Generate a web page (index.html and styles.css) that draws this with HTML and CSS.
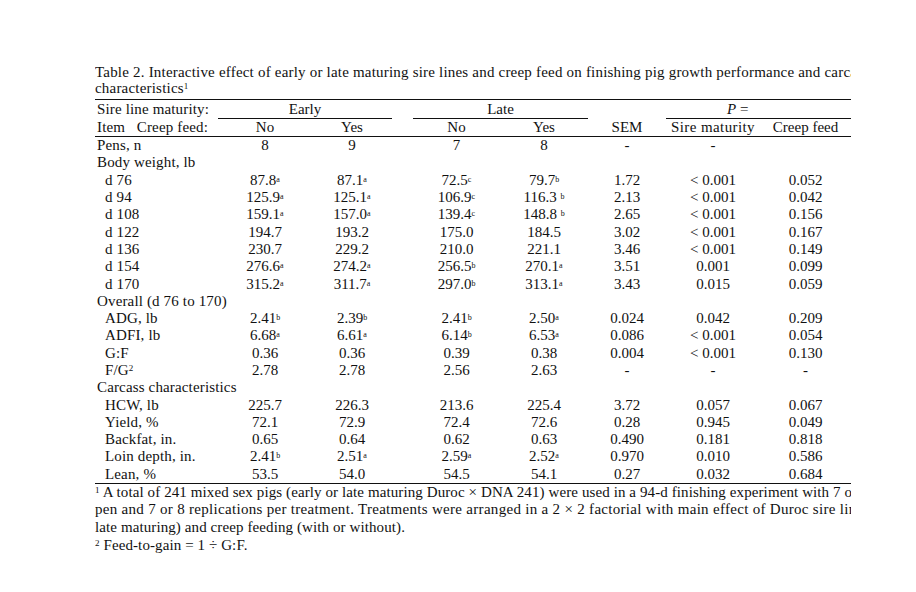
FILE: index.html
```html
<!DOCTYPE html>
<html>
<head>
<meta charset="utf-8">
<link rel="stylesheet" href="styles.css">
</head>
<body>
<div class="sheet">
  <div class="caption">
    <div class="line">Table 2. Interactive effect of early or late maturing sire lines and creep feed on finishing pig growth performance and carcass</div>
    <div class="line">characteristics<sup class="fn">1</sup></div>
  </div>
  <table class="tbl">
    <colgroup>
      <col class="c-item"><col class="c-eno"><col class="c-eyes"><col class="c-gap"><col class="c-lno"><col class="c-lyes"><col class="c-sem"><col class="c-sire"><col class="c-creep">
    </colgroup>
    <thead>
      <tr class="h1">
        <td class="lbl">Sire line maturity:</td>
        <td colspan="2" class="grp"><div class="ul">Early</div></td>
        <td></td>
        <td colspan="2" class="grp"><div class="ul">Late</div></td>
        <td></td>
        <td colspan="2" class="grp"><div class="ul pgrp"><i>P</i> =</div></td>
      </tr>
      <tr class="h2">
        <td class="lbl"><div class="itemhead"><span>Item</span><span>Creep feed:</span></div></td>
        <td>No</td><td>Yes</td><td></td><td>No</td><td>Yes</td><td>SEM</td><td class="wide">Sire maturity</td><td>Creep feed</td>
      </tr>
    </thead>
    <tbody>
      <tr><td class="lbl">Pens, n</td><td>8</td><td>9</td><td></td><td>7</td><td>8</td><td>-</td><td>-</td><td></td></tr>
      <tr><td class="lbl" colspan="9">Body weight, lb</td></tr>
      <tr><td class="lbl sub">d 76</td><td>87.8<sup>a</sup></td><td>87.1<sup>a</sup></td><td></td><td>72.5<sup>c</sup></td><td>79.7<sup>b</sup></td><td>1.72</td><td>&lt; 0.001</td><td>0.052</td></tr>
      <tr><td class="lbl sub">d 94</td><td>125.9<sup>a</sup></td><td>125.1<sup>a</sup></td><td></td><td>106.9<sup>c</sup></td><td>116.3 <sup>b</sup></td><td>2.13</td><td>&lt; 0.001</td><td>0.042</td></tr>
      <tr><td class="lbl sub">d 108</td><td>159.1<sup>a</sup></td><td>157.0<sup>a</sup></td><td></td><td>139.4<sup>c</sup></td><td>148.8 <sup>b</sup></td><td>2.65</td><td>&lt; 0.001</td><td>0.156</td></tr>
      <tr><td class="lbl sub">d 122</td><td>194.7</td><td>193.2</td><td></td><td>175.0</td><td>184.5</td><td>3.02</td><td>&lt; 0.001</td><td>0.167</td></tr>
      <tr><td class="lbl sub">d 136</td><td>230.7</td><td>229.2</td><td></td><td>210.0</td><td>221.1</td><td>3.46</td><td>&lt; 0.001</td><td>0.149</td></tr>
      <tr><td class="lbl sub">d 154</td><td>276.6<sup>a</sup></td><td>274.2<sup>a</sup></td><td></td><td>256.5<sup>b</sup></td><td>270.1<sup>a</sup></td><td>3.51</td><td>0.001</td><td>0.099</td></tr>
      <tr><td class="lbl sub">d 170</td><td>315.2<sup>a</sup></td><td>311.7<sup>a</sup></td><td></td><td>297.0<sup>b</sup></td><td>313.1<sup>a</sup></td><td>3.43</td><td>0.015</td><td>0.059</td></tr>
      <tr><td class="lbl" colspan="9">Overall (d 76 to 170)</td></tr>
      <tr><td class="lbl sub">ADG, lb</td><td>2.41<sup>b</sup></td><td>2.39<sup>b</sup></td><td></td><td>2.41<sup>b</sup></td><td>2.50<sup>a</sup></td><td>0.024</td><td>0.042</td><td>0.209</td></tr>
      <tr><td class="lbl sub">ADFI, lb</td><td>6.68<sup>a</sup></td><td>6.61<sup>a</sup></td><td></td><td>6.14<sup>b</sup></td><td>6.53<sup>a</sup></td><td>0.086</td><td>&lt; 0.001</td><td>0.054</td></tr>
      <tr><td class="lbl sub">G:F</td><td>0.36</td><td>0.36</td><td></td><td>0.39</td><td>0.38</td><td>0.004</td><td>&lt; 0.001</td><td>0.130</td></tr>
      <tr><td class="lbl sub">F/G<sup class="fn">2</sup></td><td>2.78</td><td>2.78</td><td></td><td>2.56</td><td>2.63</td><td>-</td><td>-</td><td>-</td></tr>
      <tr><td class="lbl" colspan="9">Carcass characteristics</td></tr>
      <tr><td class="lbl sub">HCW, lb</td><td>225.7</td><td>226.3</td><td></td><td>213.6</td><td>225.4</td><td>3.72</td><td>0.057</td><td>0.067</td></tr>
      <tr><td class="lbl sub">Yield, %</td><td>72.1</td><td>72.9</td><td></td><td>72.4</td><td>72.6</td><td>0.28</td><td>0.945</td><td>0.049</td></tr>
      <tr><td class="lbl sub">Backfat, in.</td><td>0.65</td><td>0.64</td><td></td><td>0.62</td><td>0.63</td><td>0.490</td><td>0.181</td><td>0.818</td></tr>
      <tr><td class="lbl sub">Loin depth, in.</td><td>2.41<sup>b</sup></td><td>2.51<sup>a</sup></td><td></td><td>2.59<sup>a</sup></td><td>2.52<sup>a</sup></td><td>0.970</td><td>0.010</td><td>0.586</td></tr>
      <tr class="last"><td class="lbl sub">Lean, %</td><td>53.5</td><td>54.0</td><td></td><td>54.5</td><td>54.1</td><td>0.27</td><td>0.032</td><td>0.684</td></tr>
    </tbody>
  </table>
  <div class="notes">
    <div class="line"><sup class="fn">1</sup> A total of 241 mixed sex pigs (early or late maturing Duroc × DNA 241) were used in a 94-d finishing experiment with 7 or 8 pigs per</div>
    <div class="line wider">pen and 7 or 8 replications per treatment. Treatments were arranged in a 2 × 2 factorial with main effect of Duroc sire line (early or</div>
    <div class="line">late maturing) and creep feeding (with or without).</div>
    <div class="line last"><sup class="fn">2</sup> Feed-to-gain = 1 ÷ G:F.</div>
  </div>
</div>
</body>
</html>
```

FILE: styles.css
```css
html, body {
  margin: 0;
  padding: 0;
  background: #ffffff;
}
body {
  font-family: "Liberation Serif", "Times New Roman", serif;
  font-size: 15px;
  color: #111111;
}
.sheet {
  width: 756px;
  margin-left: 95px;
  padding-top: 64px;
  overflow: hidden;
}
.caption .line,
.notes .line {
  white-space: nowrap;
  line-height: 16px;
}
.caption .line {
  letter-spacing: 0.2px;
}
.caption {
  padding-bottom: 3px;
}
sup {
  font-size: 8px;
  vertical-align: 3px;
  line-height: 0;
}
sup.fn {
  font-size: 9px;
  vertical-align: 4px;
}
.tbl {
  width: 756px;
  table-layout: fixed;
  border-collapse: collapse;
}
.c-item { width: 123px; }
.c-eno { width: 94px; }
.c-eyes { width: 80px; }
.c-gap { width: 21px; }
.c-lno { width: 87px; }
.c-lyes { width: 88px; }
.c-sem { width: 78px; }
.c-sire { width: 94px; }
.c-creep { width: 91px; }
.tbl td {
  padding: 0;
  height: 17.3px;
  line-height: 17px;
  text-align: center;
  white-space: nowrap;
}
.tbl td.lbl {
  text-align: left;
  padding-left: 2px;
  letter-spacing: 0.15px;
}
.tbl td.sub {
  padding-left: 10px;
}
.tbl td.wide {
  letter-spacing: 0.4px;
}
.tbl thead tr.h1 td {
  border-top: 1px solid #111;
  height: 19px;
}
.tbl thead tr.h2 td {
  border-bottom: 1px solid #111;
  height: 17px;
}
.ul {
  border-bottom: 1px solid #111;
  line-height: 17px;
}
.pgrp {
  padding-left: 61px;
  text-align: left;
}
.itemhead {
  display: flex;
  justify-content: space-between;
  padding-right: 10px;
}
.tbl tr.last td {
  border-bottom: 1px solid #111;
}
.notes .line {
  line-height: 17.5px;
  letter-spacing: 0.1px;
}
.notes .line.wider {
  letter-spacing: 0.3px;
}
.notes .line.last {
  margin-top: 1px;
}
```
